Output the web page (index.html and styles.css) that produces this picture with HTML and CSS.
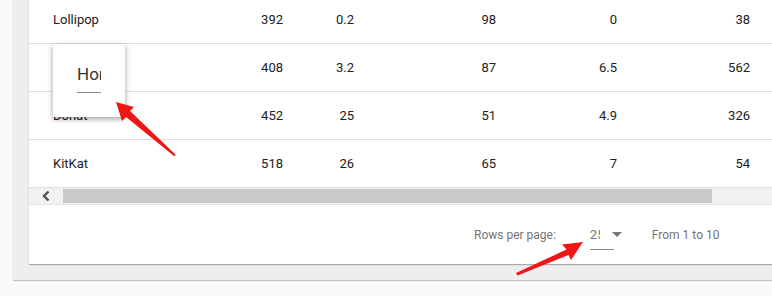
FILE: index.html
```html
<!DOCTYPE html>
<html lang="en">
<head>
    <meta charset="UTF-8">
    <title>Data table</title>
    <link rel="stylesheet" href="styles.css">
</head>
<body>
    <div class="panel">
        <div class="card">
            <div class="table">
                <div class="row">
                    <div class="cell name">Lollipop</div>
                    <div class="cell">392</div>
                    <div class="cell">0.2</div>
                    <div class="cell">98</div>
                    <div class="cell">0</div>
                    <div class="cell">38</div>
                </div>
                <div class="row">
                    <div class="cell name">Honeycomb</div>
                    <div class="cell">408</div>
                    <div class="cell">3.2</div>
                    <div class="cell">87</div>
                    <div class="cell">6.5</div>
                    <div class="cell">562</div>
                </div>
                <div class="row">
                    <div class="cell name">Donut</div>
                    <div class="cell">452</div>
                    <div class="cell">25</div>
                    <div class="cell">51</div>
                    <div class="cell">4.9</div>
                    <div class="cell">326</div>
                </div>
                <div class="row">
                    <div class="cell name">KitKat</div>
                    <div class="cell">518</div>
                    <div class="cell">26</div>
                    <div class="cell">65</div>
                    <div class="cell">7</div>
                    <div class="cell">54</div>
                </div>
            </div>

            <div class="scrollbar">
                <div class="scroll-btn">
                    <svg width="10" height="12" viewBox="0 0 10 12"><path d="M7.5 1.5 L3 6 L7.5 10.5" fill="none" stroke="#505050" stroke-width="2.4"/></svg>
                </div>
                <div class="scroll-thumb"></div>
            </div>

            <div class="pager">
                <span class="pager-label">Rows per page:</span>
                <div class="select">
                    <div class="select-box"><span class="select-value">25</span></div>
                    <svg class="select-arrow" width="10" height="5" viewBox="0 0 10 5"><path d="M0 0 L10 0 L5 5 Z" fill="#757575"/></svg>
                </div>
                <span class="pager-range">From 1 to 10</span>
            </div>
        </div>
    </div>

    <!-- inline edit popup over the name cell -->
    <div class="edit-popup">
        <div class="edit-input">Honeycomb</div>
    </div>

    <svg class="arrows" width="772" height="296" viewBox="0 0 772 296">
        <polygon points="116,102 134,107 130,111 176,155 174,156 126,117 122,121" fill="#f01616"/>
        <polygon points="583,242 562,244.5 566.5,249.5 516,273 517.5,275.5 568.5,255 571,260" fill="#f01616"/>
    </svg>
</body>
</html>
```

FILE: styles.css
```css
* {
    box-sizing: border-box;
}
body {
    margin: 0;
    background-color: #fafafa;
    font-family: Roboto, "Liberation Sans", sans-serif;
    color: #212121;
    height: 296px;
    overflow: hidden;
}
.panel {
    margin-left: 13px;
    padding: 0 0 16px 16px;
    background-color: #eeeeee;
    box-shadow: 0 1px 1px rgba(0, 0, 0, 0.22);
}
.card {
    background-color: #fff;
    box-shadow: 0 1px 1px rgba(0, 0, 0, 0.28);
}
.table {
    margin-top: -4px;
}
.row {
    display: grid;
    grid-template-columns: 171px 83px 71px 142px 121px 133px 1fr;
    height: 48px;
    border-bottom: 1px solid #e0e0e0;
    font-size: 13px;
}
.cell {
    display: flex;
    align-items: center;
    justify-content: flex-end;
}
.cell.name {
    justify-content: flex-start;
    padding-left: 24px;
}
.scrollbar {
    display: flex;
    height: 17px;
    background-color: #f1f1f1;
    border-bottom: 1px solid #e4e4e4;
}
.scroll-btn {
    width: 34px;
    display: flex;
    align-items: center;
    justify-content: center;
}
.scroll-thumb {
    width: 649px;
    margin: 1px 0;
    background-color: #c9c9c9;
}
.pager {
    height: 59px;
    display: flex;
    align-items: center;
    font-size: 12px;
    color: #757575;
    padding-left: 445px;
}
.pager-label {
    margin-right: 34px;
}
.select {
    display: flex;
    align-items: center;
    margin-right: 30px;
}
.select-box {
    width: 24px;
    height: 28px;
    padding-top: 5px;
    margin-top: 3px;
    border-bottom: 1px solid #8a8a8a;
}
.select-value {
    display: block;
    width: 10px;
    overflow: hidden;
    white-space: nowrap;
    font-size: 13px;
}
.select-arrow {
    margin-left: -2px;
    margin-top: -1px;
}
.edit-popup {
    position: absolute;
    left: 53px;
    top: 44px;
    width: 72px;
    height: 73px;
    background-color: #fff;
    box-shadow: 0 2px 6px rgba(0, 0, 0, 0.38);
}
.edit-input {
    margin: 20px 0 0 24px;
    width: 24px;
    height: 29px;
    overflow: hidden;
    white-space: nowrap;
    font-size: 17px;
    color: #333;
    border-bottom: 1px solid #8a8a8a;
}
.arrows {
    position: absolute;
    left: 0;
    top: 0;
    pointer-events: none;
}
```
